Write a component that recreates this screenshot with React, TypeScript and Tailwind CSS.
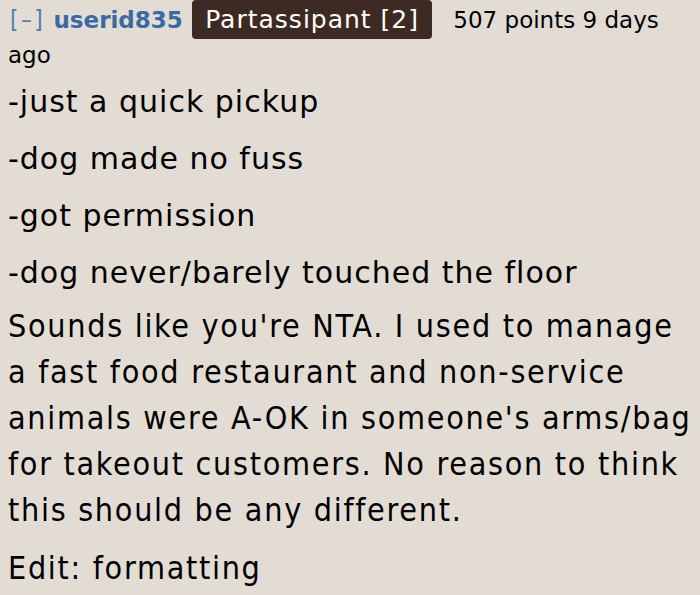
export default function App() {
  const bullets = [
    "-just a quick pickup",
    "-dog made no fuss",
    "-got permission",
    "-dog never/barely touched the floor",
  ];

  return (
    <div className="h-[595px] w-[700px] overflow-hidden bg-[#e3dcd5] pl-[8px] pr-[4px] text-black [font-family:'DejaVu_Sans',Verdana,sans-serif]">
      <div className="pt-[2px] pr-[4px] text-[23px] leading-[35px]">
        <span className="pl-[2px] text-[24px] tracking-[2.5px] text-[#4f7db5] [font-family:'DejaVu_Sans_Condensed','DejaVu_Sans',sans-serif]">
          [–]
        </span>{" "}
        <span className="ml-[1px] text-[23px] font-bold text-[#3a6aa3]">userid835</span>{" "}
        <span className="ml-[2px] -my-[2px] inline-block rounded-[4px] bg-[#3d2a22] px-[13px] text-[25px] leading-[39px] tracking-[1px] text-white">
          Partassipant [2]
        </span>{" "}
        <span className="ml-[14px]">507 points 9 days ago</span>
      </div>

      <div className="text-[30px] leading-[57px] tracking-[1px]">
        {bullets.map((b) => (
          <p key={b}>{b}</p>
        ))}
      </div>

      <div className="text-[32px] leading-[46px] tracking-[1.7px] [font-family:'DejaVu_Sans_Condensed','DejaVu_Sans',sans-serif]">
        <p className="mt-[2px]">
          Sounds like you're NTA. I used to manage a fast food restaurant and non-service animals were A-OK in
          someone's arms/bag for takeout customers. No reason to think this should be any different.
        </p>
        <p className="mt-[12px]">Edit: formatting</p>
      </div>
    </div>
  );
}
